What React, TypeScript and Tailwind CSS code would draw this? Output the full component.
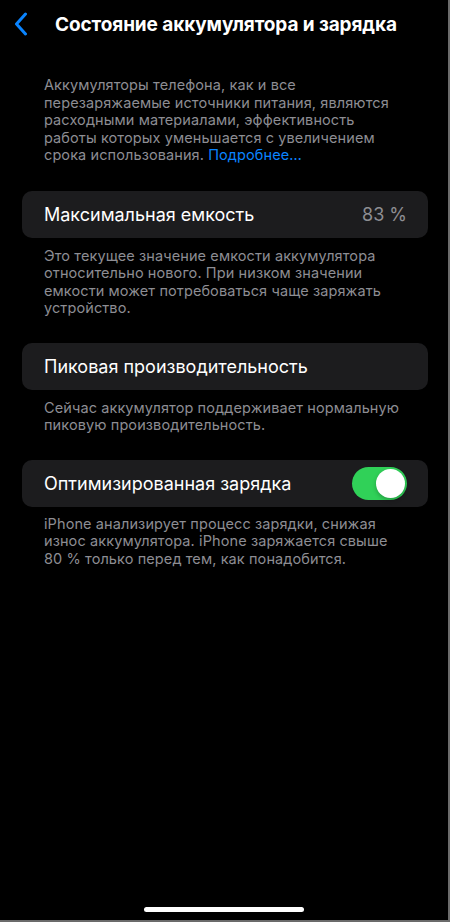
import { ReactNode } from 'react';

function Footnote({ children }: { children: ReactNode }) {
    return (
        <p className="pl-[44px] pr-[40px] text-[14.5px] leading-[17.5px] text-[#8d8d93] tracking-[0.1px]">
            {children}
        </p>
    );
}

function Card({ children }: { children: ReactNode }) {
    return (
        <div className="ml-[22px] mr-[20px] h-[47px] rounded-[10px] bg-[#1c1c1e] pl-[22px] pr-[21px] flex items-center justify-between">
            {children}
        </div>
    );
}

function Toggle({ on }: { on: boolean }) {
    return (
        <div
            className={
                'w-[55px] h-[33px] rounded-full p-[2px] flex items-center ' +
                (on ? 'bg-[#30d158] justify-end' : 'bg-[#39393d] justify-start')
            }
        >
            <div className="w-[29px] h-[29px] rounded-full bg-white shadow-[0_2px_4px_rgba(0,0,0,0.25)]" />
        </div>
    );
}

export default function App() {
    return (
        <div className="w-[450px] h-[922px] bg-black flex flex-col border-r-2 border-b-2 border-[#6b6b6b] font-['Inter','Noto_Sans',sans-serif]">
            {/* Navigation bar */}
            <div className="h-[48px] flex items-center pl-[14px]">
                <svg width="14" height="24" viewBox="0 0 14 24" fill="none">
                    <path d="M11.5 2L2.5 12L11.5 22" stroke="#0a84ff" strokeWidth="3" strokeLinecap="round" strokeLinejoin="round" />
                </svg>
                <h1 className="ml-[27px] text-[19px] font-bold text-white leading-none tracking-[-0.1px]">
                    Состояние аккумулятора и зарядка
                </h1>
            </div>

            <div className="mt-[28px]">
                <Footnote>
                    Аккумуляторы телефона, как и все перезаряжаемые источники питания, являются расходными материалами, эффективность работы которых уменьшается с увеличением срока использования. <span className="text-[#0a84ff]">Подробнее…</span>
                </Footnote>
            </div>

            {/* Maximum capacity */}
            <div className="mt-[27px]">
                <Card>
                    <span className="text-[18px] text-white">Максимальная емкость</span>
                    <span className="text-[18px] text-[#8e8e93]">83 %</span>
                </Card>
            </div>
            <div className="mt-[9px]">
                <Footnote>
                    Это текущее значение емкости аккумулятора относительно нового. При низком значении емкости может потребоваться чаще заряжать устройство.
                </Footnote>
            </div>

            {/* Peak performance */}
            <div className="mt-[26px]">
                <Card>
                    <span className="text-[18px] text-white">Пиковая производительность</span>
                </Card>
            </div>
            <div className="mt-[9px]">
                <Footnote>Сейчас аккумулятор поддерживает нормальную пиковую производительность.</Footnote>
            </div>

            {/* Optimized charging */}
            <div className="mt-[26px]">
                <Card>
                    <span className="text-[18px] text-white">Оптимизированная зарядка</span>
                    <Toggle on />
                </Card>
            </div>
            <div className="mt-[8px]">
                <Footnote>
                    iPhone анализирует процесс зарядки, снижая износ аккумулятора. iPhone заряжается свыше 80 % только перед тем, как понадобится.
                </Footnote>
            </div>

            {/* Home indicator */}
            <div className="mt-auto mb-[8px] flex justify-center">
                <div className="w-[160px] h-[5px] rounded-full bg-white" />
            </div>
        </div>
    );
}
